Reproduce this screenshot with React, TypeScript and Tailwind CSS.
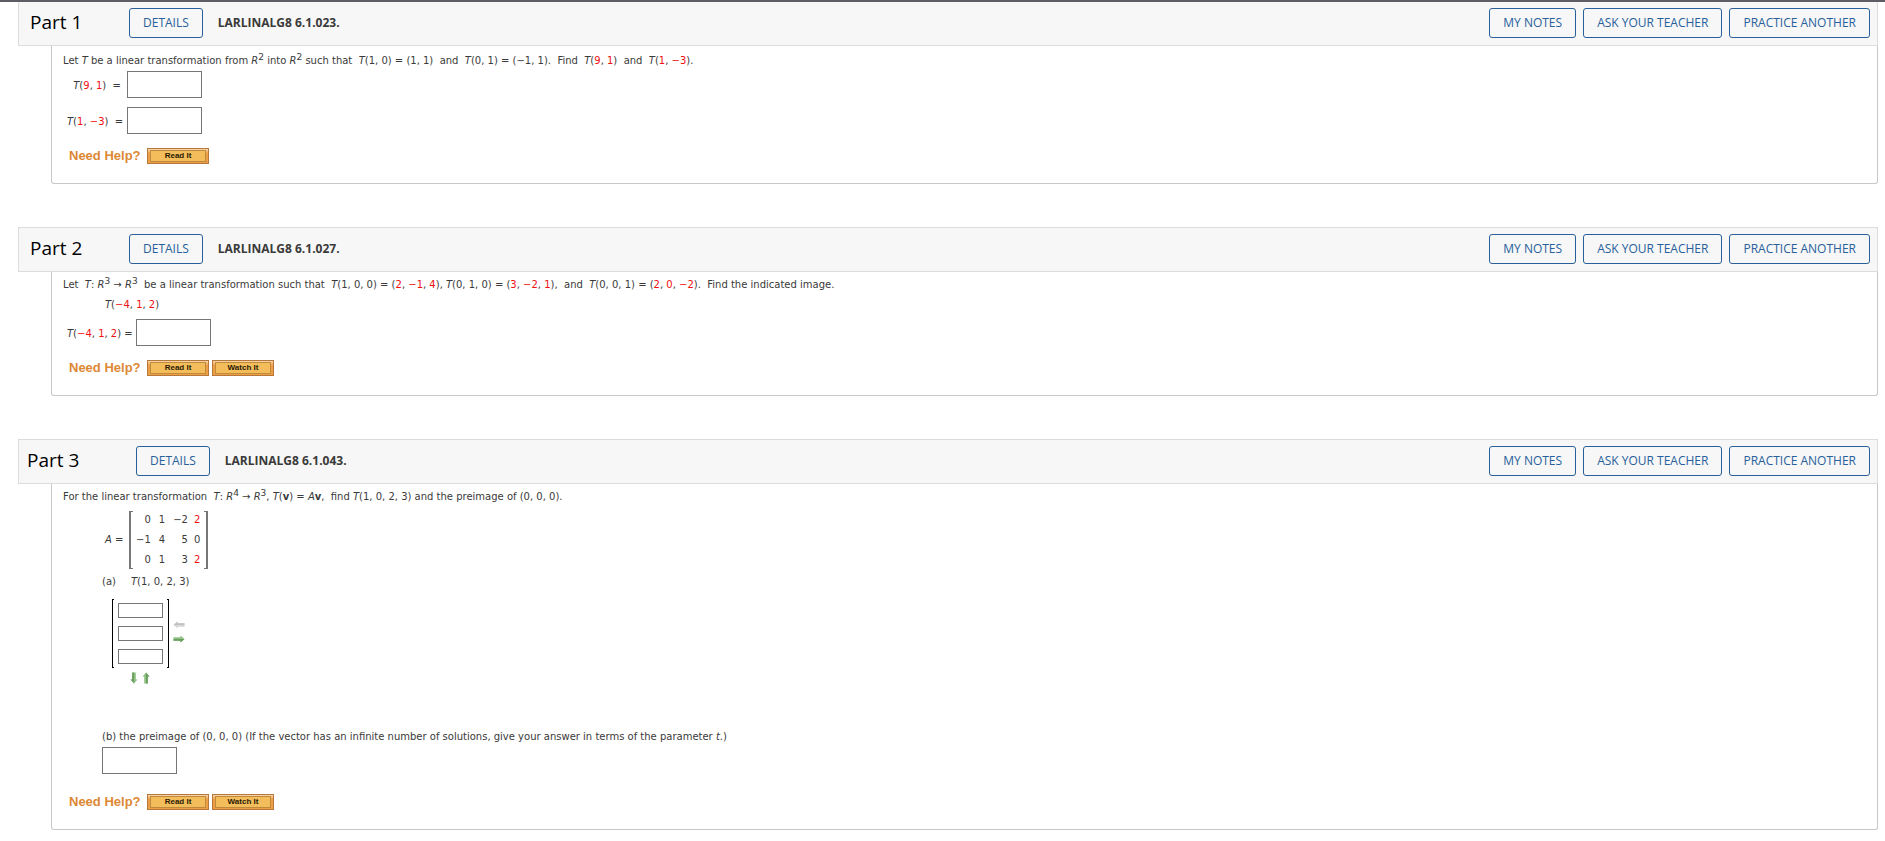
import type { ReactNode } from "react";

const Red = ({ children }: { children: ReactNode }) => <span className="text-[#f01010]">{children}</span>;

const Sup = ({ children }: { children: ReactNode }) => (
    <sup className="text-[9px] leading-none">{children}</sup>
);

const Gap = () => <>{"\u00a0 "}</>;

function HeaderButton({ children }: { children: ReactNode }) {
    return (
        <button
            type="button"
            className="h-[30px] shrink-0 whitespace-nowrap rounded-[3px] border border-[#27609b] px-[13px] text-[12px] font-medium text-[#27609b]"
        >
            {children}
        </button>
    );
}

function HelpButton({ children }: { children: ReactNode }) {
    return (
        <button
            type="button"
            className="h-4 w-[62px] border border-[#b5783a] bg-linear-to-b from-[#f8d9b0] via-[#ee9f45] via-30% to-[#ee9f45] px-0.5 py-px"
        >
            <span className="flex h-3 items-center justify-center border border-[#c08a3c] bg-[#f3bd5b] text-[8px] leading-none font-bold text-[#2a1a05]">
                {children}
            </span>
        </button>
    );
}

function NeedHelp({ watch }: { watch?: boolean }) {
    return (
        <div className="ml-1.5 flex h-4 items-center gap-[3px] font-['Liberation_Sans',sans-serif]">
            <span className="w-[75px] text-[13px] font-bold text-[#dd8833]">Need Help?</span>
            <HelpButton>Read It</HelpButton>
            {watch && <HelpButton>Watch It</HelpButton>}
        </div>
    );
}

function AnswerBox({ id }: { id: string }) {
    return <input id={id} type="text" className="block h-[27px] w-[75px] border border-[#767676] bg-white px-1" />;
}

interface SectionProps {
    part: string;
    code: string;
    labelClass?: string;
    headerClass?: string;
    children: ReactNode;
}

function Section({ part, code, labelClass = "w-[110px] pl-[11px]", headerClass = "border-t", children }: SectionProps) {
    return (
        <section className="mb-[43px] ml-[18px] mr-[7px]">
            <header
                className={`flex items-start border-x border-b border-[#dcdcdc] bg-[#f7f7f7] pt-1.5 pr-[7px] pb-[7px] font-['Open_Sans',sans-serif] ${headerClass}`}
            >
                <h2 className={`shrink-0 text-[19px] leading-7 text-black ${labelClass}`}>{part}</h2>
                <HeaderButton>DETAILS</HeaderButton>
                <span className="ml-[15px] text-[12px] leading-[30px] font-bold text-[#3a3a3a]">{code}</span>
                <div className="ml-auto flex gap-[7px]">
                    <HeaderButton>MY NOTES</HeaderButton>
                    <HeaderButton>ASK YOUR TEACHER</HeaderButton>
                    <HeaderButton>PRACTICE ANOTHER</HeaderButton>
                </div>
            </header>
            <div className="ml-[33px] rounded-b-[3px] border-x border-b border-[#c8c8c8] pt-[3px] pr-3 pb-[19px] pl-[11px]">
                {children}
            </div>
        </section>
    );
}

const matrix = [
    ["0", "1", "−2", "2"],
    ["−1", "4", "5", "0"],
    ["0", "1", "3", "2"],
];

function MatrixA() {
    return (
        <div className="ml-[42px] flex items-center pt-[3px]">
            <span className="w-6">
                <i>A</i> =
            </span>
            <div className="h-[58px] w-1 border-y border-l-2 border-[#777]" />
            <table className="text-right">
                <tbody>
                    {matrix.map((row, r) => (
                        <tr key={r} className="h-5">
                            {row.map((cell, c) => (
                                <td key={c} className="p-0 pl-2 first:pl-[3px] last:pl-1.5">
                                    {c === 3 && cell === "2" ? <Red>{cell}</Red> : cell}
                                </td>
                            ))}
                        </tr>
                    ))}
                </tbody>
            </table>
            <div className="ml-1 h-[58px] w-1 border-y border-r-2 border-[#777]" />
        </div>
    );
}

function Arrow({ label, turn, muted }: { label: string; turn: string; muted?: boolean }) {
    return (
        <button type="button" aria-label={label} className="block size-3">
            <svg viewBox="0 0 12 12" className={`size-3 ${turn}`}>
                <path d="M.5 4.200H7.500V2.500l4 3.500-4 3.500V7.800H.5z" fill={muted ? "#d6d6d6" : "#8fc083"} />
                <path d="M.5 6h11l-4 3.500V7.800H.5z" fill={muted ? "#c2c2c2" : "#6a9f60"} />
            </svg>
        </button>
    );
}

function VectorInput() {
    return (
        <div className="ml-[49px] pt-[7px]">
            <div className="flex items-center">
                <div className="h-[69px] w-0.5 border-y border-l border-black" />
                <div className="mx-1 flex flex-col gap-2">
                    {[1, 2, 3].map((n) => (
                        <input
                            key={n}
                            type="text"
                            aria-label={`Row ${n}`}
                            className="block h-[15px] w-[45px] border border-[#767676] bg-white px-0.5"
                        />
                    ))}
                </div>
                <div className="h-[69px] w-0.5 border-y border-r border-black" />
                <div className="ml-1 flex flex-col gap-0.5 pb-[3px]">
                    <Arrow label="Remove column" turn="rotate-180" muted />
                    <Arrow label="Add column" turn="rotate-0" />
                </div>
            </div>
            <div className="mt-1 ml-4 flex">
                <Arrow label="Add row" turn="rotate-90" />
                <Arrow label="Remove row" turn="-rotate-90" />
            </div>
        </div>
    );
}

export default function App() {
    return (
        <main className="min-h-screen border-t-2 border-[#5f5d64] bg-white font-['DejaVu_Sans',Verdana,sans-serif] text-[10px] leading-5 text-[#3a3a3a]">
            <Section part="Part 1" code="LARLINALG8 6.1.023." headerClass="border-t-0">
                <p className="pt-0.5">
                    Let <i>T</i> be a linear transformation from <i>R</i><Sup>2</Sup> into <i>R</i><Sup>2</Sup> such that
                    <Gap /><i>T</i>(1, 0) = (1, 1)<Gap />and<Gap /><i>T</i>(0, 1) = (−1, 1).<Gap />Find<Gap />
                    <i>T</i>(<Red>9</Red>, <Red>1</Red>)<Gap />and<Gap /><i>T</i>(<Red>1</Red>, <Red>−3</Red>).
                </p>
                <div className="ml-1 grid grid-cols-[54px_auto] items-center justify-start gap-x-1.5 gap-y-[9px] whitespace-nowrap">
                    <label htmlFor="p1a" className="pt-0.5 text-right">
                        <i>T</i>(<Red>9</Red>, <Red>1</Red>)&nbsp; =
                    </label>
                    <AnswerBox id="p1a" />
                    <label htmlFor="p1b" className="pt-0.5 text-right">
                        <i>T</i>(<Red>1</Red>, <Red>−3</Red>)&nbsp; =
                    </label>
                    <AnswerBox id="p1b" />
                </div>
                <div className="pt-3.5">
                    <NeedHelp />
                </div>
            </Section>

            <Section part="Part 2" code="LARLINALG8 6.1.027.">
                <p>
                    Let<Gap /><i>T</i>: <i>R</i><Sup>3</Sup> → <i>R</i><Sup>3</Sup><Gap />be a linear transformation such that
                    <Gap /><i>T</i>(1, 0, 0) = (<Red>2</Red>, <Red>−1</Red>, <Red>4</Red>), <i>T</i>(0, 1, 0) = (<Red>3</Red>,{" "}
                    <Red>−2</Red>, <Red>1</Red>),<Gap />and<Gap /><i>T</i>(0, 0, 1) = (<Red>2</Red>, <Red>0</Red>,{" "}
                    <Red>−2</Red>).<Gap />Find the indicated image.
                </p>
                <p className="ml-[42px]">
                    <i>T</i>(<Red>−4</Red>, <Red>1</Red>, <Red>2</Red>)
                </p>
                <div className="ml-1 flex items-center gap-[3px] pt-1">
                    <label htmlFor="p2a" className="pt-0.5">
                        <i>T</i>(<Red>−4</Red>, <Red>1</Red>, <Red>2</Red>) =
                    </label>
                    <AnswerBox id="p2a" />
                </div>
                <div className="pt-3.5">
                    <NeedHelp watch />
                </div>
            </Section>

            <Section part="Part 3" code="LARLINALG8 6.1.043." labelClass="w-[117px] pl-2">
                <p>
                    For the linear transformation<Gap /><i>T</i>: <i>R</i><Sup>4</Sup> → <i>R</i><Sup>3</Sup>, <i>T</i>(<b>v</b>) ={" "}
                    <i>A</i><b>v</b>,<Gap />find <i>T</i>(1, 0, 2, 3) and the preimage of (0, 0, 0).
                </p>
                <MatrixA />
                <p className="ml-[39px] flex pt-0.5">
                    <span className="w-[29px]">(a)</span>
                    <span>
                        <i>T</i>(1, 0, 2, 3)
                    </span>
                </p>
                <VectorInput />
                <div className="ml-[39px] pt-[43px]">
                    <label htmlFor="p3b">
                        (b) the preimage of (0, 0, 0) (If the vector has an infinite number of solutions, give your answer in terms
                        of the parameter <i>t</i>.)
                    </label>
                    <AnswerBox id="p3b" />
                </div>
                <div className="pt-5">
                    <NeedHelp watch />
                </div>
            </Section>
        </main>
    );
}
